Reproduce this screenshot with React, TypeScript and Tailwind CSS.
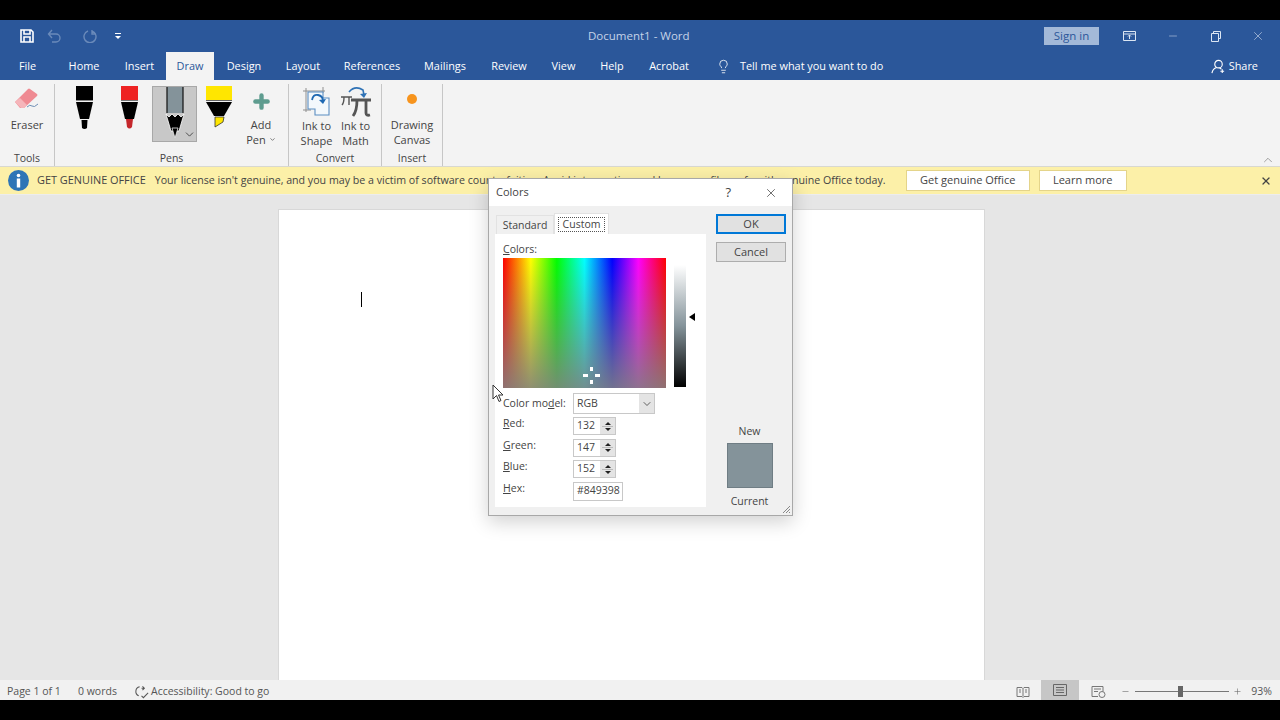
import { ChevronDown, ChevronUp, Lightbulb, Minus, Plus, X } from "lucide-react";

const tabs = [
  { label: "File", w: "w-[55px]" },
  { label: "Home", w: "w-[58px]" },
  { label: "Insert", w: "w-[53px]" },
  { label: "Draw", w: "w-[48px]", active: true },
  { label: "Design", w: "w-[60px]" },
  { label: "Layout", w: "w-[58px]" },
  { label: "References", w: "w-[80px]" },
  { label: "Mailings", w: "w-[66px]" },
  { label: "Review", w: "w-[62px]" },
  { label: "View", w: "w-[47px]" },
  { label: "Help", w: "w-[50px]" },
  { label: "Acrobat", w: "w-[64px]" },
];

const SaveIcon = () => (
  <svg width="16" height="16" viewBox="0 0 16 16" fill="none" stroke="white" strokeWidth="1.6">
    <path d="M2 2h10l2 2v10H2z" />
    <path d="M5 2v4h6V2M5 14V9h6v5" />
  </svg>
);

const PenBlack = () => (
  <svg width="20" height="44" viewBox="0 0 20 44">
    <path d="M2 0h17v14H2z" fill="#000" />
    <path d="M2 14.500h17" stroke="#888" strokeWidth="1" />
    <path d="M2 16h17l-4 17H6z" fill="#000" />
    <path d="M7.500 34h6l-.5 8q-2.500 2-5 0z" fill="#000" />
  </svg>
);

const PenRed = () => (
  <svg width="20" height="44" viewBox="0 0 20 44">
    <path d="M2 0h17v14H2z" fill="#ee2222" />
    <path d="M2 14.500h17" stroke="#777" strokeWidth="1" />
    <path d="M2 16h17l-4 17H6z" fill="#000" />
    <path d="M7 33h7l-1 8q-2.500 3-5 0z" fill="#c4272b" />
  </svg>
);

const PencilGray = () => (
  <svg width="20" height="53" viewBox="0 0 20 53">
    <path d="M2 0h16v26H2z" fill="#84939a" />
    <path d="M2 0v26M18 0v26" stroke="#111" strokeWidth="1.200" />
    <path d="M1 27l3 3 3-3 3 3 3-3 3 3 3-3-5 17H6z" fill="#000" stroke="#fff" strokeWidth="0.800" />
    <path d="M7 41h6l-3 10z" fill="#000" stroke="#e8e8e8" strokeWidth="0.800" />
  </svg>
);

const Highlighter = () => (
  <svg width="28" height="42" viewBox="0 0 28 42">
    <path d="M1 0h26v14H1z" fill="#ffe600" />
    <path d="M1 14.500h26" stroke="#666" strokeWidth="1" />
    <path d="M1 16h26l-8 14H9z" fill="#000" />
    <path d="M10 31h9l-1 5-8 5z" fill="#ffe600" stroke="#333" strokeWidth="0.800" />
  </svg>
);

const EraserIcon = () => (
  <svg width="28" height="24" viewBox="0 0 28 24">
    <path d="M2 15L15 2q1-1 2 0l7 5q1 1 0 2L11 21H7z" fill="#ef8a92" />
    <path d="M2 15l6 6h3l3-3-7-7z" fill="#f5b5ba" />
    <path d="M14 20q3-3 5-1t6-2" stroke="#6f8fb5" strokeWidth="1" fill="none" />
  </svg>
);

const InkShape = () => (
  <svg width="28" height="30" viewBox="0 0 28 30" fill="none">
    <path d="M3 1v24M0 4h22M0 23h8M20 0v6" stroke="#8f8f8f" strokeWidth="1" />
    <path d="M5 5h15v6h6v17H12v-6H5z" fill="#f3f8fc" stroke="#5b8ec2" strokeWidth="1.100" />
    <path d="M9 13q1-6 6-5t5 6" stroke="#1f69b3" strokeWidth="1.800" />
    <path d="M16 13l4 4 3-5z" fill="#1f69b3" />
  </svg>
);

const InkMath = () => (
  <svg width="32" height="30" viewBox="0 0 32 30" fill="none">
    <path d="M1 10h11M4 10q0 6-2 8M9 10v8" stroke="#555" strokeWidth="1.400" />
    <path d="M11 13h20M17 13q0 11-4 16M26 13v13q0 3 4 2" stroke="#555" strokeWidth="2.800" />
    <path d="M9 5q6-7 14-2l1 5" stroke="#2f72b5" strokeWidth="1.600" />
    <path d="M20 7l4 4 3-5z" fill="#2f72b5" />
  </svg>
);

const InfoIcon = () => (
  <svg width="21" height="21" viewBox="0 0 21 21">
    <circle cx="10.500" cy="10.500" r="10.500" fill="#2e75b6" />
    <circle cx="10.500" cy="5.500" r="1.800" fill="white" />
    <rect x="8.800" y="8.500" width="3.400" height="9" fill="white" />
  </svg>
);

const Group = ({ label, width, children }: { label: string; width: string; children: React.ReactNode }) => (
  <div className={`${width} h-[82px] flex flex-col border-r border-[#c6c6c6] shrink-0`}>
    <div className="h-[67px] flex">{children}</div>
    <div className="h-[15px] text-center text-[10.500px] leading-[15px] text-[#444]">{label}</div>
  </div>
);

const Spinner = ({ value }: { value: string }) => (
  <div className="w-[43px] h-[18px] border border-[#c8c8c8] bg-white flex items-center">
    <span className="flex-1 pl-[3px] text-[10.500px] text-[#444]">{value}</span>
    <div className="w-[15px] h-full bg-[#e4e4e4] flex flex-col items-center justify-center">
      <div className="w-0 h-0 border-x-[3px] border-x-transparent border-b-[3px] border-b-[#222]" />
      <div className="w-[11px] h-px bg-[#bbb] my-[1px]" />
      <div className="w-0 h-0 border-x-[3px] border-x-transparent border-t-[3px] border-t-[#222]" />
    </div>
  </div>
);

const Field = ({ under, rest, children }: { under: string; rest: string; children: React.ReactNode }) => (
  <div className="flex h-[21.500px] items-start">
    <div className="w-[70px] text-[10.500px] leading-[12px] text-[#444]">
      <span className="underline">{under}</span>
      {rest}
    </div>
    {children}
  </div>
);

export default function App() {
  return (
    <div className="relative w-[1280px] h-[720px] overflow-hidden bg-black flex flex-col font-['Open_Sans','Noto_Sans',sans-serif]">
      <div className="h-[20px] shrink-0" />

      {/* title bar */}
      <div className="h-[32px] shrink-0 bg-[#2b579a] flex items-center relative text-white">
        <div className="pl-[19px] flex items-center">
          <SaveIcon />
          <svg className="ml-[12px] opacity-40" width="16" height="14" viewBox="0 0 16 14" fill="none" stroke="#c8d6ea" strokeWidth="1.400">
            <path d="M2 5h7a4 4 0 0 1 0 8H5M5 1L1.500 5 5 9" />
          </svg>
          <svg className="ml-[20px] opacity-40" width="14" height="14" viewBox="0 0 14 14" fill="none" stroke="#c8d6ea" strokeWidth="1.400">
            <path d="M5 2a6 6 0 1 0 4 0M9 1v4h4" />
          </svg>
          <svg className="ml-[17px]" width="8" height="8" viewBox="0 0 8 8" fill="white">
            <rect x="1" y="1" width="6" height="1" />
            <path d="M1 4h6L4 7z" />
          </svg>
        </div>
        <div className="flex-1 pl-[466px] text-[11.500px] text-[#c5d3e8]">Document1 - Word</div>
        <div className="w-[55px] h-[18px] bg-[#a3b9d8] text-[#2b579a] text-[11.500px] flex items-center justify-center">Sign in</div>
        <svg className="ml-[24px]" width="13" height="10" viewBox="0 0 13 10" fill="none" stroke="#dce6f3" strokeWidth="1">
          <path d="M.5.500h12v9H.5zM.5 3h12M6.500 8V4M5 5.500L6.500 4 8 5.500" />
        </svg>
        <Minus className="ml-[31px]" size={12} strokeWidth={1} color="#dce6f3" />
        <svg className="ml-[32px]" width="10" height="11" viewBox="0 0 10 11" fill="none" stroke="#dce6f3" strokeWidth="1">
          <path d="M.5 2.500h7v8h-7zM2.500 2.500v-2h7v7h-2" />
        </svg>
        <X className="ml-[30px] mr-[15px]" size={14} strokeWidth={1} color="#dce6f3" />
      </div>

      {/* tab row */}
      <div className="h-[28px] shrink-0 bg-[#2b579a] flex items-stretch text-white text-[10.900px]">
        {tabs.map((t) => (
          <div
            key={t.label}
            className={`${t.w} shrink-0 flex items-center justify-center ${t.active ? "bg-[#f3f3f3] text-[#2b579a]" : ""}`}
          >
            {t.label}
          </div>
        ))}
        <div className="flex items-center pl-[15px] flex-1">
          <Lightbulb size={15} strokeWidth={1.300} />
          <span className="pl-[9px]">Tell me what you want to do</span>
        </div>
        <div className="flex items-center pr-[22px]">
          <svg width="15" height="15" viewBox="0 0 16 16" fill="none" stroke="white" strokeWidth="1.200">
            <circle cx="8" cy="5.500" r="4" />
            <path d="M1 15q1-5 5-6M9 9.500q1.500.5 2 1.500M12 11v4M10 13h4" />
          </svg>
          <span className="pl-[3px]">Share</span>
        </div>
      </div>

      {/* ribbon */}
      <div className="h-[87px] shrink-0 bg-[#f3f3f3] border-b border-[#d8d8d0] flex items-start pt-[4px] relative">
        <Group label="Tools" width="w-[55px]">
          <div className="w-full flex flex-col items-center pt-[3px] text-[11px] text-[#444]">
            <EraserIcon />
            <span className="mt-[6px]">Eraser</span>
          </div>
        </Group>
        <Group label="Pens" width="w-[234px]">
          <div className="flex items-start pl-[19px]">
            <div className="pt-[2px] w-[45px]"><PenBlack /></div>
            <div className="pt-[2px] w-[33px]"><PenRed /></div>
            <div className="mt-[2px] w-[45px] h-[56px] bg-[#c8c8c8] border border-[#a8a8a8] flex justify-center relative">
              <PencilGray />
              <ChevronDown className="absolute right-[0px] bottom-[0px]" size={13} strokeWidth={1.500} color="#333" />
            </div>
            <div className="pt-[2px] ml-[8px]"><Highlighter /></div>
            <div className="ml-[8px] w-[40px] flex flex-col items-center text-[11px] leading-[15px] text-[#444]">
              <Plus className="mt-[7px]" size={21} strokeWidth={5} color="#5e9c8f" />
              <span className="mt-[5px]">Add</span>
              <span className="flex items-center">
                Pen
                <ChevronDown className="ml-[3px]" size={7} strokeWidth={2.500} color="#555" />
              </span>
            </div>
          </div>
        </Group>
        <Group label="Convert" width="w-[93px]">
          <div className="flex pl-[9px] text-[11px] leading-[15px] text-[#444]">
            <div className="w-[37px] flex flex-col items-center pt-[3px]">
              <InkShape />
              <span className="mt-[1px]">Ink to</span>
              <span>Shape</span>
            </div>
            <div className="ml-[2px] w-[37px] flex flex-col items-center pt-[3px]">
              <InkMath />
              <span className="mt-[1px]">Ink to</span>
              <span>Math</span>
            </div>
          </div>
        </Group>
        <Group label="Insert" width="w-[61px]">
          <div className="w-full flex flex-col items-center text-[11px] leading-[15px] text-[#444]">
            <div className="mt-[10px] w-[10px] h-[10px] rounded-full bg-[#f7941d]" />
            <span className="mt-[13px]">Drawing</span>
            <span>Canvas</span>
          </div>
        </Group>
        <ChevronUp className="absolute right-[5px] bottom-[-1px]" size={14} strokeWidth={1} color="#666" />
      </div>

      {/* genuine office bar */}
      <div className="h-[27px] shrink-0 bg-[#fcf0a8] flex items-center text-[#444] text-[10.650px] whitespace-nowrap">
        <div className="pl-[8px]"><InfoIcon /></div>
        <span className="pl-[8px] font-medium text-[10.900px]">GET GENUINE OFFICE</span>
        <span className="pl-[9px] w-[760px] shrink-0 overflow-hidden">
          Your license isn't genuine, and you may be a victim of software counterfeiting. Avoid interruption and keep your files safe with genuine Office today.
        </span>
        <div className="w-[124px] h-[21px] bg-white border border-[#e4d48a] flex items-center justify-center text-[11px]">Get genuine Office</div>
        <div className="ml-[9px] w-[88px] h-[21px] bg-white border border-[#e4d48a] flex items-center justify-center text-[11px]">Learn more</div>
        <div className="flex-1 flex justify-end pr-[8px]">
          <X size={12} strokeWidth={2.500} color="#444" />
        </div>
      </div>

      {/* document */}
      <div className="flex-1 min-h-0 bg-[#e6e6e6] pt-[14px] pl-[278px] border-t border-[#ededed]">
        <div className="w-[707px] h-full bg-white border-x border-t border-[#d8d8d8] pt-[82px] pl-[82px]">
          <div className="w-px h-[15px] bg-black" />
        </div>
      </div>

      {/* status bar */}
      <div className="h-[20px] shrink-0 bg-[#f1f1f1] flex items-center pt-[3px] text-[10.500px] text-[#555]">
        <span className="pl-[7px] w-[78px]">Page 1 of 1</span>
        <span className="w-[56px]">0 words</span>
        <svg width="16" height="14" viewBox="0 0 17 14" fill="none" stroke="#555" strokeWidth="1.100">
          <path d="M6 1.500a5 5 0 0 0-1 9.500M9 1l2 2-2 2M11 3H8M8 11l2 2 5-5" />
        </svg>
        <span className="pl-[1px]">Accessibility: Good to go</span>
        <div className="flex-1" />
        <svg width="14" height="12" viewBox="0 0 14 12" fill="none" stroke="#777" strokeWidth="1">
          <path d="M1 1.500h5l1 1 1-1h5v9H8l-1 1-1-1H1zM7 2.500v8M3 4h2M3 6h2M9 4h2M9 6h2" />
        </svg>
        <div className="ml-[11px] mt-[-3px] w-[38px] h-[20px] bg-[#c6c6c6] flex items-center justify-center">
          <svg width="14" height="12" viewBox="0 0 14 12" fill="none" stroke="#666" strokeWidth="1">
            <path d="M.5.500h13v11H.5zM3 3.500h8M3 6h8M3 8.500h8" />
          </svg>
        </div>
        <svg className="ml-[12px]" width="15" height="13" viewBox="0 0 15 13" fill="none" stroke="#777" strokeWidth="1">
          <path d="M7 11.500H1v-10h11v5M3 4h7M3 6.500h4" />
          <circle cx="11" cy="9.500" r="3" />
        </svg>
        <Minus className="ml-[15px]" size={9} strokeWidth={1.500} color="#666" />
        <div className="ml-[5px] w-[94px] h-px bg-[#777] relative">
          <div className="absolute left-[43px] top-[-5px] w-[5px] h-[11px] bg-[#666]" />
        </div>
        <Plus className="ml-[4px]" size={9} strokeWidth={1.500} color="#666" />
        <span className="pl-[9px] pr-[8px]">93%</span>
      </div>
      <div className="h-[20px] shrink-0" />

      {/* colors dialog */}
      <div className="absolute left-[488px] top-[178px] w-[305px] h-[338px] bg-[#f0f0f0] border border-[#a8a8a8] shadow-[0_6px_18px_rgba(0,0,0,0.18)] flex flex-col text-[#444]">
        <div className="h-[27px] shrink-0 bg-white flex items-center pl-[7px] text-[11px]">
          <span className="flex-1">Colors</span>
          <span className="text-[13px] mr-[33px]">?</span>
          <X className="mr-[14px]" size={14} strokeWidth={1.200} color="#333" />
        </div>
        <div className="flex-1 flex pl-[6px] pt-[7px] min-h-0">
          <div className="w-[211px] flex flex-col">
            <div className="h-[21px] flex items-end text-[10.500px] pl-[1px]">
              <div className="w-[58px] h-[19px] pt-[2px] bg-[#f0f0f0] border-x border-t border-[#e2e2e2] flex items-center justify-center">Standard</div>
              <div className="w-[55px] h-[21px] pt-[1px] bg-white border-x border-t border-[#e2e2e2] flex items-center justify-center">
                <span className="border border-dotted border-[#555] px-[4px] leading-[13px]">Custom</span>
              </div>
            </div>
            <div className="h-[273px] bg-white pl-[8px] pt-[7px] text-[10.500px]">
              <div className="h-[17px] leading-[16px]"><span className="underline">C</span>olors:</div>
              <div className="flex items-start h-[130px]">
                <div className="relative w-[163px] h-[130px] bg-[linear-gradient(to_right,#ff0000_0%,#ffff00_17%,#00ff00_33%,#00ffff_50%,#0000ff_67%,#ff00ff_83%,#ff0000_100%)]">
                  <div className="absolute inset-0 bg-[linear-gradient(to_bottom,rgba(128,128,128,0),rgba(128,128,128,0.88))]" />
                  <div className="absolute left-[87px] top-[109px] w-[3px] h-[4px] bg-white" />
                  <div className="absolute left-[87px] top-[122px] w-[3px] h-[4px] bg-white" />
                  <div className="absolute left-[80px] top-[116px] w-[5px] h-[3px] bg-white" />
                  <div className="absolute left-[92px] top-[116px] w-[5px] h-[3px] bg-white" />
                </div>
                <div className="ml-[8px] w-[12px] h-[122px] mt-[7px] bg-[linear-gradient(to_bottom,#ffffff_0%,#84939a_50%,#000000_100%)]" />
                <div className="ml-[3px] mt-[55px] w-0 h-0 border-y-[4px] border-y-transparent border-r-[6px] border-r-black" />
              </div>
              <div className="mt-[5px] flex h-[24px] items-start">
                <div className="w-[70px] leading-[20px]">Color mo<span className="underline">d</span>el:</div>
                <div className="w-[82px] h-[21px] border border-[#c8c8c8] flex items-center">
                  <span className="flex-1 pl-[3px]">RGB</span>
                  <div className="w-[15px] h-full bg-[#e4e4e4] flex items-center justify-center">
                    <ChevronDown size={12} strokeWidth={1.500} color="#333" />
                  </div>
                </div>
              </div>
              <Field under="R" rest="ed:"><Spinner value="132" /></Field>
              <Field under="G" rest="reen:"><Spinner value="147" /></Field>
              <Field under="B" rest="lue:"><Spinner value="152" /></Field>
              <Field under="H" rest="ex:">
                <div className="w-[50px] h-[19px] border border-[#c8c8c8] flex items-center pl-[3px]">#849398</div>
              </Field>
            </div>
          </div>
          <div className="flex-1 pl-[10px] flex flex-col text-[11px]">
            <div className="w-[70px] h-[20px] mt-[1px] bg-[#e1e1e1] border-2 border-[#0078d7] flex items-center justify-center">OK</div>
            <div className="mt-[8px] w-[70px] h-[20px] bg-[#e1e1e1] border border-[#adadad] flex items-center justify-center">Cancel</div>
            <div className="mt-[162px] w-[67px] flex flex-col items-center text-[10.500px]">
              <span className="leading-[14px]">New</span>
              <div className="mt-[5px] w-[46px] h-[45px] bg-[#84939a] border border-[#6f7d84]" />
              <span className="mt-[6px] leading-[14px]">Current</span>
            </div>
          </div>
        </div>
        <svg className="absolute right-[1px] bottom-[1px]" width="9" height="9" viewBox="0 0 9 9" stroke="#888" strokeWidth="1">
          <path d="M8 1L1 8M8 4L4 8M8 7L7 8" />
        </svg>
      </div>

      {/* mouse cursor */}
      <svg className="absolute left-[492px] top-[384px]" width="13" height="19" viewBox="0 0 13 19" fill="white" stroke="#333" strokeWidth="1">
        <path d="M1 1v14l3.500-3.500 2.500 6 2-1-2.500-5.500H11z" />
      </svg>
    </div>
  );
}
